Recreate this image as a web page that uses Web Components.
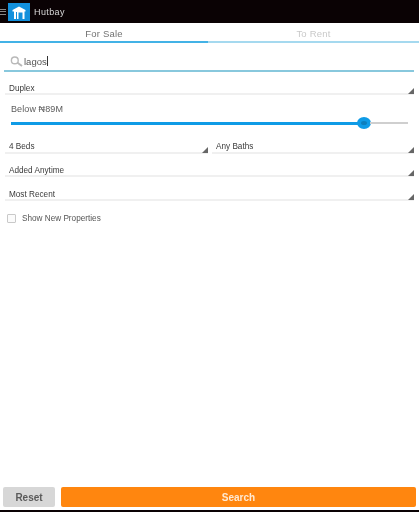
<!DOCTYPE html>
<html>
<head>
<meta charset="utf-8">
<title>Hutbay</title>
<style>
html,body{margin:0;height:100%;background:#fff;}
body{font-family:"Liberation Sans",Arial,sans-serif;}
</style>
</head>
<body>
<search-screen></search-screen>

<script>
class AppBar extends HTMLElement{
  constructor(){
    super();
    this.shadowDOM=this.attachShadow({mode:"open"});
  }
  connectedCallback(){
    this.shadowDOM.innerHTML=`
    <style>
      :host{display:flex;align-items:center;height:23px;background:#0a0204;color:#d8d8d8;font-size:9px;letter-spacing:.4px;}
      .menu{width:6px;height:6px;margin-right:2px;border-top:1px solid #888;border-bottom:1px solid #888;position:relative;box-sizing:border-box;}
      .menu::after{content:"";position:absolute;left:0;right:0;top:1.5px;height:1px;background:#888;}
      .logo{width:22px;height:18px;margin-top:1px;margin-right:4px;background:#1290dc;display:flex;align-items:center;justify-content:center;}
    </style>
    <div class="menu"></div>
    <div class="logo">
      <svg width="14" height="13" viewBox="0 0 14 13">
        <path d="M0.5 4 7 0.5 13.5 4V5.5H12.5V13H2V5.5H0.5Z" fill="#fff"/>
        <path d="M4 6H5V13H4ZM6.5 6.5H10.5V13H6.5Z" fill="#1290dc"/>
      </svg>
    </div>
    <span>Hutbay</span>`;
  }
}
customElements.define("app-bar",AppBar);

class TabStrip extends HTMLElement{
  constructor(){
    super();
    this.shadowDOM=this.attachShadow({mode:"open"});
  }
  connectedCallback(){
    this.shadowDOM.innerHTML=`
    <style>
      :host{display:grid;grid-template-columns:208px 1fr;height:19px;font-size:9.5px;letter-spacing:.2px;}
      div{display:flex;align-items:center;justify-content:center;box-sizing:border-box;padding-top:2px;}
      .on{color:#727272;border-bottom:2px solid #43b2e6;}
      .off{color:#c9c9c9;border-bottom:2px solid #a5d9ef;}
    </style>
    <div class="on">For Sale</div>
    <div class="off">To Rent</div>`;
  }
}
customElements.define("tab-strip",TabStrip);

class SearchField extends HTMLElement{
  constructor(){
    super();
    this.shadowDOM=this.attachShadow({mode:"open"});
  }
  connectedCallback(){
    this.shadowDOM.innerHTML=`
    <style>
      :host{display:flex;align-items:center;height:29px;margin:0 5px 0 4px;box-sizing:border-box;border-bottom:2px solid #88c8dd;padding:9px 0 0 6px;font-size:9.5px;color:#555;}
      svg{margin-right:1px;}
      i{display:inline-block;width:1px;height:10px;background:#333;}
    </style>
    <svg width="13" height="11" viewBox="0 0 13 11" fill="none" stroke="#b9b9b9">
      <circle cx="4.8" cy="4.4" r="3.4" stroke-width="1.4"/>
      <path d="M7.5 6.8 12 10" stroke-width="2"/>
    </svg>
    <span><slot></slot></span><i></i>`;
  }
}
customElements.define("search-field",SearchField);

class SelectRow extends HTMLElement{
  constructor(){
    super();
    this.shadowDOM=this.attachShadow({mode:"open"});
  }
  connectedCallback(){
    this.shadowDOM.innerHTML=`
    <style>
      :host{display:block;height:var(--row-height,24px);box-sizing:border-box;position:relative;font-size:8.2px;color:#3a3a3a;border-bottom:2px solid #f0f0f0;}
      .label{display:block;padding:var(--label-top,12px) 0 0 4px;line-height:10px;}
      svg{position:absolute;right:0;bottom:-1px;}
    </style>
    <span class="label"><slot></slot></span>
    <svg width="6" height="6" viewBox="0 0 6 6"><path d="M6 0V6H0Z" fill="#666"/></svg>`;
  }
}
customElements.define("select-row",SelectRow);

class PriceSlider extends HTMLElement{
  constructor(){
    super();
    this.shadowDOM=this.attachShadow({mode:"open"});
  }
  connectedCallback(){
    this.shadowDOM.innerHTML=`
    <style>
      :host{display:block;height:34px;box-sizing:border-box;padding:9px 11px 0;font-size:9px;color:#5c5c5c;}
      .label{line-height:10px;letter-spacing:.1px;}
      .track{display:flex;align-items:center;height:14px;margin-top:2px;}
      .fill{width:347px;height:3px;background:#0f9be6;}
      .thumb{width:14px;height:12px;border-radius:50%;margin:0 -1px;background:#0f9be6;display:flex;align-items:center;justify-content:center;flex:none;}
      .thumb::after{content:"";width:6px;height:4px;border-radius:50%;background:#0d7fbd;}
      .rest{flex:1;height:2px;background:#cfcfcf;}
    </style>
    <div class="label"><slot></slot></div>
    <div class="track"><div class="fill"></div><div class="thumb"></div><div class="rest"></div></div>`;
  }
}
customElements.define("price-slider",PriceSlider);

class CheckRow extends HTMLElement{
  constructor(){
    super();
    this.shadowDOM=this.attachShadow({mode:"open"});
  }
  connectedCallback(){
    this.shadowDOM.innerHTML=`
    <style>
      :host{display:flex;align-items:center;gap:6px;height:20px;padding:7px 0 0 7px;font-size:8.2px;color:#555;}
      .box{width:7px;height:7px;border:1px solid #c9c9c9;border-radius:1px;background:#fbfbfb;}
    </style>
    <div class="box"></div><span><slot></slot></span>`;
  }
}
customElements.define("check-row",CheckRow);

class ActionBar extends HTMLElement{
  constructor(){
    super();
    this.shadowDOM=this.attachShadow({mode:"open"});
  }
  connectedCallback(){
    this.shadowDOM.innerHTML=`
    <style>
      :host{display:flex;gap:6px;padding:0 3px 0 3px;height:20px;font-size:10px;}
      button{font:inherit;border:0;padding:0;border-radius:2px;font-weight:bold;}
      .reset{width:52px;background:#d7d7d7;color:#5a5a5a;}
      .search{flex:1;background:#ff860f;color:#ffe9d2;}
    </style>
    <button class="reset">Reset</button>
    <button class="search">Search</button>`;
  }
}
customElements.define("action-bar",ActionBar);

class SearchScreen extends HTMLElement{
  constructor(){
    super();
    this.shadowDOM=this.attachShadow({mode:"open"});
  }
  connectedCallback(){
    this.shadowDOM.innerHTML=`
    <style>
      :host{display:flex;flex-direction:column;height:512px;overflow:hidden;filter:blur(.3px);}
      .gap{height:1px;background:#fff;}
      .form{flex:1;}
      .rows{margin:0 5px;}
      .pair{display:grid;grid-template-columns:203px 1fr;gap:4px;margin:0 5px;--row-height:25px;--label-top:13px;}
      .foot{height:2px;background:#0a0204;margin-top:3px;}
    </style>
    <app-bar></app-bar>
    <div class="gap"></div>
    <tab-strip></tab-strip>
    <div class="form">
      <search-field>lagos</search-field>
      <div class="rows"><select-row style="--row-height:23px">Duplex</select-row></div>
      <price-slider>Below ₦89M</price-slider>
      <div class="pair">
        <select-row>4 Beds</select-row>
        <select-row>Any Baths</select-row>
      </div>
      <div class="rows">
        <select-row style="--row-height:23px">Added Anytime</select-row>
        <select-row style="--label-top:13px">Most Recent</select-row>
      </div>
      <check-row>Show New Properties</check-row>
    </div>
    <action-bar></action-bar>
    <div class="foot"></div>`;
  }
}
customElements.define("search-screen",SearchScreen);
</script>
</body>
</html>
